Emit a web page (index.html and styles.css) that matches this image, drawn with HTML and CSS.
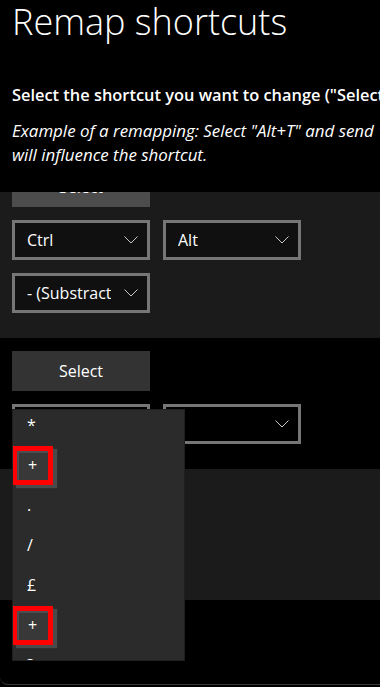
FILE: index.html
```html
<!DOCTYPE html>
<html lang="en">

<head>
    <meta charset="UTF-8">
    <meta name="viewport" content="width=device-width, initial-scale=1.0">
    <title>Remap shortcuts</title>
    <link rel="stylesheet" href="styles.css">
</head>

<body>

    <div class="window">
        <header class="page-head">
            <h1>Remap shortcuts</h1>
            <p class="lead">Select the shortcut you want to change ("Select") and the shortcut you want it to send ("Send")</p>
            <p class="hint">Example of a remapping: Select "Alt+T" and send "Ctrl+Alt+Shift+T", the app<br>will influence the shortcut.</p>
        </header>

        <div class="list">
            <div class="list-inner">

                <div class="row">
                    <button class="select-btn active">Select</button>
                    <div class="keys">
                        <div class="combo"><span class="combo-text">Ctrl</span><svg class="chevron" width="14" height="8" viewBox="0 0 14 8"><polyline points="0.5,0.5 7,7 13.5,0.5" /></svg></div>
                        <div class="combo"><span class="combo-text">Alt</span><svg class="chevron" width="14" height="8" viewBox="0 0 14 8"><polyline points="0.5,0.5 7,7 13.5,0.5" /></svg></div>
                        <div class="combo"><span class="combo-text">- (Substract)</span><svg class="chevron" width="14" height="8" viewBox="0 0 14 8"><polyline points="0.5,0.5 7,7 13.5,0.5" /></svg></div>
                    </div>
                </div>

                <div class="row dark">
                    <button class="select-btn">Select</button>
                    <div class="keys">
                        <div class="combo"><span class="combo-text">+</span><svg class="chevron" width="14" height="8" viewBox="0 0 14 8"><polyline points="0.5,0.5 7,7 13.5,0.5" /></svg></div>
                        <div class="combo"><span class="combo-text"></span><svg class="chevron" width="14" height="8" viewBox="0 0 14 8"><polyline points="0.5,0.5 7,7 13.5,0.5" /></svg></div>
                    </div>

                    <!-- open dropdown for the first key -->
                    <div class="menu">
                        <ul class="menu-list">
                            <li>*</li>
                            <li><span class="key">+</span></li>
                            <li>.</li>
                            <li>/</li>
                            <li>£</li>
                            <li><span class="key">+</span></li>
                            <li>?</li>
                        </ul>
                    </div>
                </div>

                <div class="row">
                    <button class="select-btn">Select</button>
                    <div class="keys">
                        <div class="combo"><span class="combo-text"></span><svg class="chevron" width="14" height="8" viewBox="0 0 14 8"><polyline points="0.5,0.5 7,7 13.5,0.5" /></svg></div>
                    </div>
                </div>

            </div>
        </div>
    </div>

</body>

</html>
```

FILE: styles.css
```css
/* Basic styling */
body {
    font-family: 'Open Sans', 'Noto Sans', sans-serif;
    background-color: #000;
    color: #fff;
    margin: 0;
    padding: 0;
    overflow: hidden;
}

.window {
    height: 684px;
    border-bottom: 1px solid #3a3a3a;
    border-bottom-left-radius: 8px;
    display: flex;
    flex-direction: column;
    overflow: hidden;
}

/* Header */
.page-head {
    height: 192px;
    flex-shrink: 0;
    padding: 0 12px;
    box-sizing: border-box;
    background-color: #000;
    white-space: nowrap;
    overflow: hidden;
    position: relative;
    z-index: 2;
}

h1 {
    font-size: 36px;
    font-weight: 300;
    line-height: 46px;
    margin: -1px 0 0;
}

.lead {
    font-size: 16.4px;
    font-weight: 600;
    line-height: 22px;
    margin: 39px 0 0;
}

.hint {
    font-size: 16.9px;
    font-style: italic;
    line-height: 24px;
    margin: 13px 0 0;
}

/* Rows */
.list {
    flex: 1;
    overflow: hidden;
}

.list-inner {
    margin-top: -38px;
}

.row {
    background-color: #1b1b1b;
    padding: 13px 12px 25px;
    position: relative;
}

.row.dark {
    background-color: #000;
}

.select-btn {
    display: block;
    width: 138px;
    height: 40px;
    margin-bottom: 13px;
    padding: 0;
    border: none;
    background-color: #333;
    color: #fff;
    font-family: inherit;
    font-size: 16px;
}

.select-btn.active {
    background-color: #4c4c4c;
}

.keys {
    display: flex;
    flex-wrap: wrap;
    gap: 13px;
}

.combo {
    width: 138px;
    height: 40px;
    box-sizing: border-box;
    border: 3px solid #767676;
    background-color: rgba(0, 0, 0, 0.4);
    display: flex;
    align-items: center;
    padding: 0 9px 0 12px;
    font-size: 16px;
}

.combo-text {
    flex: 1;
    overflow: hidden;
    white-space: nowrap;
    margin-right: 13px;
}

.chevron {
    flex-shrink: 0;
}

.chevron polyline {
    fill: none;
    stroke: #c8c8c8;
    stroke-width: 1;
}

/* Open dropdown */
.menu {
    position: absolute;
    left: 12px;
    top: 71px;
    width: 173px;
    height: 252px;
    box-sizing: border-box;
    background-color: #2b2b2b;
    border: 1px solid #1f1f1f;
    overflow: hidden;
    z-index: 1;
}

.menu-list {
    list-style: none;
    margin: -5px 0 0;
    padding: 0;
}

.menu-list li {
    height: 40px;
    display: flex;
    align-items: center;
    padding-left: 14px;
    font-size: 16px;
}

.key {
    width: 41px;
    height: 39px;
    box-sizing: border-box;
    margin-left: -15px;
    border: 5px solid #ff0000;
    background-color: #383838;
    box-shadow: inset 2px 2px 0 #4d4d4d, 4px 3px 1px #4a4a4a;
    display: flex;
    align-items: center;
    justify-content: center;
}
```
